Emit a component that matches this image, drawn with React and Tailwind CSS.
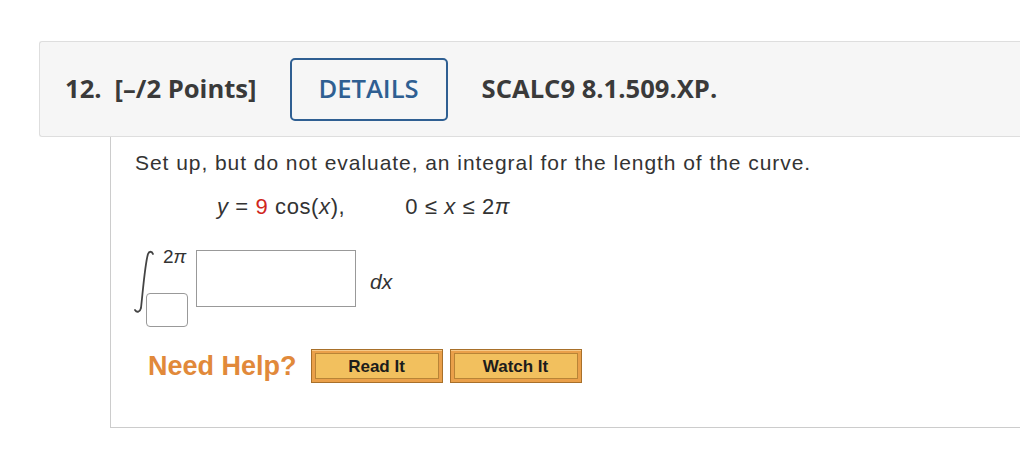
import React from "react";

function HelpButton({ label }) {
  return (
    <button className="w-[132px] h-[34px] bg-[#eaa04a] border border-[#a8702a] p-[3px] shadow-[inset_0_1px_0_#f6c886]">
      <span className="flex items-center justify-center h-full bg-[#f2c05e] border border-[#b98436] text-[17px] font-bold text-[#1c1c1c] font-['Liberation_Sans',Arial,sans-serif]">
        {label}
      </span>
    </button>
  );
}

function IntegralSign() {
  return (
    <svg width="22" height="64" viewBox="0 0 22 64" className="text-[#444]">
      <path
        d="M20 4 C19 1 16 1 15 4 C12 14 10 40 8 58 C7 62 4 63 2 60"
        fill="none"
        stroke="currentColor"
        strokeWidth="1.8"
        strokeLinecap="round"
      />
    </svg>
  );
}

export default function App() {
  return (
    <div className="bg-white w-[1020px] h-[464px] overflow-hidden pt-[41px] pl-[39px]">
      <div className="h-[96px] bg-[#f6f6f6] border border-r-0 border-[#dedede] rounded-l-[3px] flex items-center pl-[25px] font-['Open_Sans',sans-serif] text-[#3a3a3a]">
        <span className="text-[25.6px] font-bold">12.</span>
        <span className="text-[25.6px] font-bold ml-[13px]">[–/2 Points]</span>
        <div className="ml-[33px] w-[158px] h-[63px] border-2 border-[#2f5f92] rounded-[5px] flex items-center justify-center text-[25.6px] font-semibold text-[#2f5f92]">
          DETAILS
        </div>
        <span className="ml-[34px] text-[25.6px] font-bold">SCALC9 8.1.509.XP.</span>
      </div>
      <div className="ml-[71px] h-[291px] border-l border-b border-[#cccccc] pl-[24px] pt-[12px] font-['Liberation_Sans',Arial,sans-serif] text-[#333333]">
        <p className="text-[21px] leading-[28px] tracking-[0.95px]">
          Set up, but do not evaluate, an integral for the length of the curve.
        </p>
        <div className="flex items-center mt-[16px] ml-[82px] text-[22px] leading-[28px] tracking-[0.6px]">
          <span>
            <i>y</i> = <span className="text-[#d0271d]">9</span> cos(<i>x</i>),
          </span>
          <span className="ml-[60px]">
            0 ≤ <i>x</i> ≤ 2<i>π</i>
          </span>
        </div>
        <div className="flex items-start mt-[29px]">
          <div className="relative w-[61px] h-[80px]">
            <div className="absolute left-[-2px] top-[0px]">
              <IntegralSign />
            </div>
            <span className="absolute left-[28px] top-[-3px] text-[19px] leading-[20px]">
              2<i>π</i>
            </span>
            <div className="absolute left-[11px] top-[43px] w-[42px] h-[34px] border border-[#999] rounded-[4px] bg-white"></div>
          </div>
          <div className="w-[160px] h-[57px] border border-[#999] bg-white"></div>
          <span className="ml-[14px] mt-[16px] text-[21px] italic">dx</span>
        </div>
        <div className="flex items-center mt-[16px] ml-[13px]">
          <span className="text-[27px] font-bold text-[#e1893a] mr-[14px]">
            Need Help?
          </span>
          <HelpButton label="Read It" />
          <div className="w-[7px]"></div>
          <HelpButton label="Watch It" />
        </div>
      </div>
    </div>
  );
}
